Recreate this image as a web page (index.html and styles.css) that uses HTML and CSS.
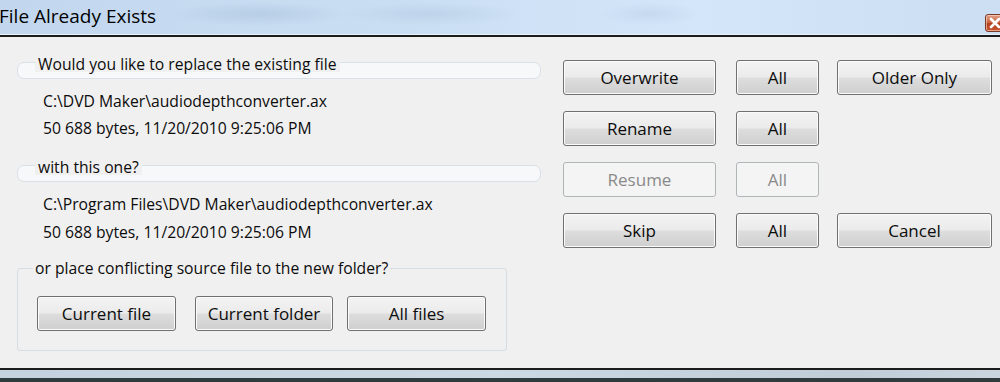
FILE: index.html
```html
<!DOCTYPE html>
<html>
<head>
<meta charset="utf-8">
<link rel="stylesheet" href="styles.css">
</head>
<body>
<div class="titlebar">
  <span class="title">File Already Exists</span>
  <span class="close"><svg width="14" height="12" viewBox="0 0 14 12"><path d="M3 2 L11 10 M11 2 L3 10" stroke="#fff" stroke-width="2.6" stroke-linecap="round"/></svg></span>
</div>
<div class="dialog">
  <div class="left">
    <div class="legend">
      <div class="band"></div>
      <span class="label">Would you like to replace the existing file</span>
    </div>
    <div class="info first">
      <div>C:\DVD Maker\audiodepthconverter.ax</div>
      <div>50 688 bytes, 11/20/2010 9:25:06 PM</div>
    </div>
    <div class="legend second">
      <div class="band"></div>
      <span class="label">with this one?</span>
    </div>
    <div class="info">
      <div>C:\Program Files\DVD Maker\audiodepthconverter.ax</div>
      <div>50 688 bytes, 11/20/2010 9:25:06 PM</div>
    </div>
    <fieldset class="group">
      <legend>or place conflicting source file to the new folder?</legend>
      <div class="group-buttons">
        <button class="btn w139">Current file</button>
        <button class="btn w138 g19">Current folder</button>
        <button class="btn w139 g14">All files</button>
      </div>
    </fieldset>
  </div>
  <div class="right">
    <div class="row">
      <button class="btn wide">Overwrite</button>
      <button class="btn small">All</button>
      <button class="btn large">Older Only</button>
    </div>
    <div class="row">
      <button class="btn wide">Rename</button>
      <button class="btn small">All</button>
    </div>
    <div class="row">
      <button class="btn wide disabled">Resume</button>
      <button class="btn small disabled">All</button>
    </div>
    <div class="row">
      <button class="btn wide">Skip</button>
      <button class="btn small">All</button>
      <button class="btn large">Cancel</button>
    </div>
  </div>
</div>
<div class="frame-bottom"></div>
</body>
</html>
```

FILE: styles.css
```css
* { box-sizing: border-box; }
html, body {
  margin: 0;
  padding: 0;
  width: 1000px;
  height: 382px;
  overflow: hidden;
  background: #f0f0f0;
  font-family: "Open Sans", "Noto Sans", sans-serif;
  color: #0c0c0c;
}
.titlebar {
  height: 35px;
  display: flex;
  align-items: center;
  justify-content: space-between;
  overflow: hidden;
  border-bottom: 1px solid #e9f1f9;
  background:
    radial-gradient(ellipse 90px 12px at 260px 14px, rgba(160,185,212,0.4), rgba(160,185,212,0) 100%),
    radial-gradient(ellipse 90px 12px at 430px 14px, rgba(160,185,212,0.3), rgba(160,185,212,0) 100%),
    radial-gradient(ellipse 50px 12px at 650px 14px, rgba(160,185,212,0.25), rgba(160,185,212,0) 100%),
    linear-gradient(90deg, #c2d7ee 0%, #cadef3 40%, #d4e6f9 70%, #cbdef2 100%);
}
.title {
  font-size: 19px;
  color: #000;
  margin-left: -1px;
  padding-bottom: 3px;
}
.close {
  align-self: flex-end;
  width: 36px;
  height: 18px;
  margin-right: -21px;
  margin-bottom: 2px;
  border: 1px solid #7a3b28;
  border-radius: 3px;
  background: linear-gradient(#e2a38a 0%, #c9603b 50%, #b23e1c 51%, #c8562e 100%);
  box-shadow: inset 0 0 0 1px rgba(255,220,200,0.6);
  display: flex;
  align-items: center;
  padding-left: 2px;
}
.dialog {
  height: 333px;
  border-top: 2px solid #1c1c1c;
  display: flex;
  padding: 19px 0 0 17px;
  font-size: 15.7px;
}
.left {
  width: 524px;
}
.legend {
  display: grid;
}
.legend > * {
  grid-area: 1 / 1;
}
.band {
  margin-top: 6px;
  height: 17px;
  border: 1px solid #d9e0e7;
  border-radius: 7px;
  background: #f7f8fa;
}
.label {
  justify-self: start;
  align-self: start;
  margin-left: 18px;
  padding: 0 3px;
  line-height: 16px;
  background: #f0f0f0;
}
.legend.second {
  margin-top: 17px;
}
.info {
  margin-top: 9px;
  padding-left: 26px;
  line-height: 27.5px;
}
.info.first {
  line-height: 27px;
}
.group {
  margin: 13px 0 0 0;
  width: 490px;
  border: 1px solid #d6dde3;
  border-radius: 3px;
  padding: 0 0 19px 19px;
  min-width: 0;
}
.group legend {
  padding: 0 2px;
  margin-left: -4px;
  line-height: 18px;
}
.group-buttons {
  display: flex;
  margin-top: 19px;
}
.btn {
  height: 35px;
  border: 1px solid #707070;
  border-radius: 3px;
  background: linear-gradient(#f3f3f3 0%, #ebebeb 48%, #dddddd 52%, #cfcfcf 100%);
  box-shadow: inset 0 0 0 1px #fbfbfb;
  font-family: "Open Sans", "Noto Sans", sans-serif;
  font-size: 17px;
  color: #0c0c0c;
  padding: 0 0 1px 0;
  margin: 0;
}
.btn.disabled {
  border-color: #b0b5b8;
  background: #f4f4f4;
  box-shadow: none;
  color: #8a8a8a;
}
.w139 { width: 139px; }
.w138 { width: 138px; }
.g19 { margin-left: 19px; }
.g14 { margin-left: 14px; }
.right {
  margin-left: 22px;
  padding-top: 4px;
  display: flex;
  flex-direction: column;
  gap: 16px;
}
.row {
  display: flex;
}
.wide { width: 153px; }
.small { width: 83px; margin-left: 20px; }
.large { width: 155px; margin-left: 18px; }
.frame-bottom {
  height: 14px;
  border-top: 2px solid #1c1c1c;
  border-bottom: 4px solid #2f3b3c;
  background: linear-gradient(90deg, #c3d2de 0%, #cbd9e4 50%, #c0cdd8 85%, #c9d6e0 100%);
}
```
